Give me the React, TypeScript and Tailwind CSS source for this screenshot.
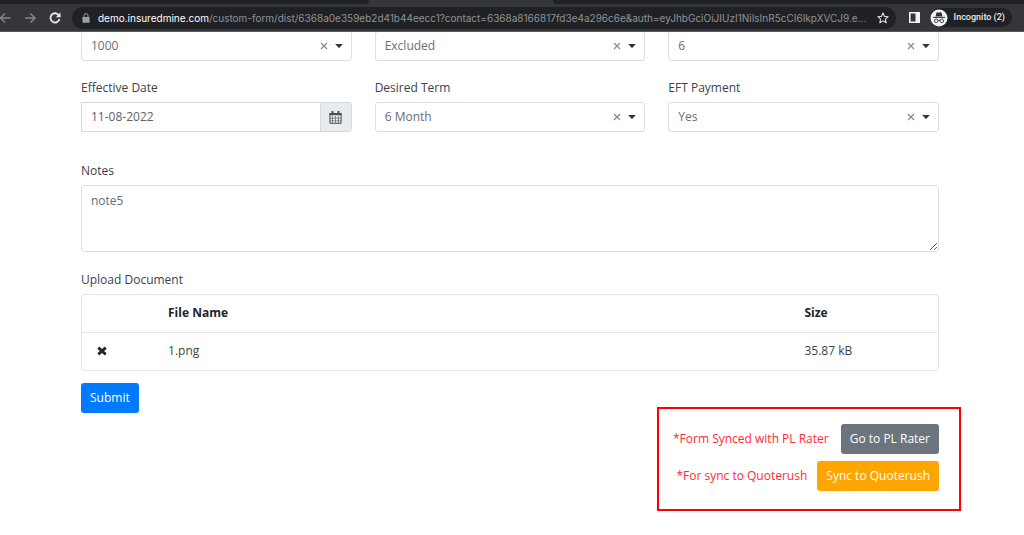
import type { ReactNode } from "react";

type SelectFieldProps = {
  id: string;
  label?: string;
  ariaLabel?: string;
  value: string;
};

function Field({ id, label, children }: { id: string; label: string; children: ReactNode }) {
  return (
    <div>
      <label htmlFor={id} className="mb-1 block h-5 leading-5 text-[#3c4248]">
        {label}
      </label>
      {children}
    </div>
  );
}

function SelectBox({ id, ariaLabel, value }: SelectFieldProps) {
  return (
    <div className="flex h-[30px] items-center rounded-[3px] border border-[#dadfe5] pr-2">
      <select
        id={id}
        aria-label={ariaLabel}
        defaultValue={value}
        className="h-full min-w-0 flex-1 appearance-none bg-transparent pl-[9px] text-[#686e74] outline-none"
      >
        <option>{value}</option>
      </select>
      <button type="button" aria-label="Clear" className="flex h-4 w-4 items-center justify-center">
        <svg viewBox="0 0 8 8" className="h-2 w-2" stroke="#888888" strokeWidth="1.2" fill="none">
          <path d="M1 1L7 7M7 1L1 7" />
        </svg>
      </button>
      <svg viewBox="0 0 8 4" className="ml-[3px] h-1 w-2" fill="#333333">
        <path d="M0.2 0H7.8L4.4 3.8Q4 4.1 3.6 3.8Z" />
      </svg>
    </div>
  );
}

function SelectField({ id, label, value }: SelectFieldProps) {
  return (
    <Field id={id} label={label ?? ""}>
      <SelectBox id={id} value={value} />
    </Field>
  );
}

function BrowserBar() {
  return (
    <header className="relative z-10 bg-[#35363a]">
      <div className="flex h-1 justify-between">
        <div className="w-[36%] rounded-br bg-[#202124]" />
        <div className="w-[46%] rounded-bl bg-[#202124]" />
      </div>
      <div className="flex h-7 items-center border-b border-[#55565a]">
        <button type="button" aria-label="Back" className="w-3">
          <svg viewBox="0 0 12 12" className="h-3 w-3" fill="none" stroke="#85868a" strokeWidth="1.5">
            <path d="M10.5 6H0M5 1.5L0.5 6L5 10.5" />
          </svg>
        </button>
        <button type="button" aria-label="Forward" className="ml-3">
          <svg viewBox="0 0 12 12" className="h-3 w-3" fill="none" stroke="#85868a" strokeWidth="1.5">
            <path d="M1 6H11M6.5 1.5L11 6L6.5 10.5" />
          </svg>
        </button>
        <button type="button" aria-label="Reload" className="ml-[13px]">
          <svg viewBox="0 0 12 12" className="h-3 w-3" fill="none" stroke="#e8eaed" strokeWidth="1.8">
            <path d="M9.8 3.2A4.6 4.6 0 1 0 10.5 7" />
            <path d="M11.5 0.5V5.3H6.8Z" fill="#e8eaed" stroke="none" />
          </svg>
        </button>
        <div className="ml-[11px] flex h-[22px] min-w-0 flex-1 items-center rounded-full bg-[#202124] pr-[7px] pl-[10px] font-['Inter',sans-serif] text-[10px]">
          <svg viewBox="0 0 8 10" className="h-[10px] w-2 shrink-0" fill="#9aa0a6">
            <path d="M1 4H7Q7.6 4 7.6 4.6V9.2Q7.6 9.8 7 9.8H1Q0.4 9.8 0.4 9.2V4.6Q0.4 4 1 4Z" />
            <path d="M2 4.3V2.6A2 2 0 0 1 6 2.6V4.3" fill="none" stroke="#9aa0a6" />
          </svg>
          <label htmlFor="url" className="ml-2 leading-4 text-white">
            demo.insuredmine.com
          </label>
          <input
            id="url"
            type="text"
            className="h-4 min-w-0 flex-1 bg-transparent leading-4 text-[#8f9398] outline-none"
            defaultValue="/custom-form/dist/6368a0e359eb2d41b44eecc1?contact=6368a8166817fd3e4a296c6e&auth=eyJhbGciOiJIUzI1NiIsInR5cCI6IkpXVCJ9.e..."
          />
          <button type="button" aria-label="Bookmark" className="ml-1">
            <svg viewBox="0 0 12 12" className="h-3 w-3" fill="none" stroke="#dfe1e5" strokeWidth="1.1" strokeLinejoin="round">
              <path d="M6 1L7.5 4.4L11.2 4.7L8.4 7.1L9.2 10.8L6 8.9L2.8 10.8L3.6 7.1L0.8 4.7L4.5 4.4Z" />
            </svg>
          </button>
        </div>
        <button type="button" aria-label="Side panel" className="ml-[13px]">
          <svg viewBox="0 0 11 11" className="h-[11px] w-[11px]" fill="#f1f3f4">
            <path fillRule="evenodd" d="M0 0H11V11H0ZM1.6 1.6V9.4H6.5V1.6Z" />
          </svg>
        </button>
        <button
          type="button"
          className="mr-3 ml-[10px] flex h-[19px] items-center rounded-full bg-[#202124] pr-[7px] font-['Roboto',sans-serif] text-[9px] font-medium whitespace-nowrap text-[#e8eaed]"
        >
          <svg viewBox="0 0 18 18" className="mr-[6px] h-[18px] w-[18px]">
            <circle cx="9" cy="9" r="8.5" fill="#f1f3f4" />
            <path d="M5.5 7.4L6.5 3.7Q6.8 3 7.5 3.3L9 3.8L10.5 3.3Q11.2 3 11.5 3.7L12.5 7.4Z" fill="#303134" />
            <path d="M3 8.4H15" stroke="#303134" />
            <g fill="none" stroke="#303134" strokeWidth="0.9">
              <circle cx="6.2" cy="11.8" r="1.8" />
              <circle cx="11.8" cy="11.8" r="1.8" />
              <path d="M8 11.5Q9 10.9 10 11.5" />
            </g>
          </svg>
          Incognito (2)
        </button>
      </div>
    </header>
  );
}

export default function App() {
  return (
    <div className="min-h-screen overflow-hidden bg-white font-['Open_Sans','Noto_Sans',sans-serif] text-[12px] text-[#212529]">
      <BrowserBar />
      <form className="-mt-px pr-[85px] pl-[81px]" onSubmit={(e) => e.preventDefault()}>
        <div className="grid grid-cols-3 gap-x-[23px] gap-y-[17px]">
          <SelectBox id="deductible" ariaLabel="Deductible" value="1000" />
          <SelectBox id="coverage" ariaLabel="Coverage" value="Excluded" />
          <SelectBox id="months" ariaLabel="Months" value="6" />

          <Field id="effective-date" label="Effective Date">
            <div className="flex h-[30px] overflow-hidden rounded-r-[3px] border border-[#d3d9df]">
              <input
                id="effective-date"
                type="text"
                defaultValue="11-08-2022"
                className="min-w-0 flex-1 px-[9px] text-[#5c636a] outline-none"
              />
              <button
                type="button"
                aria-label="Open calendar"
                className="flex w-[31px] items-center justify-center border-l border-[#d3d9df] bg-[#e9ecef]"
              >
                <svg viewBox="0 0 13 13" className="h-[13px] w-[13px]" fill="none" stroke="#495057">
                  <path d="M0.9 2.5H12.1V12.3H0.9Z" />
                  <path d="M0.5 3.2H12.5" strokeWidth="2.2" />
                  <path d="M3.5 0V3.5M9.5 0V3.5" strokeWidth="2" />
                  <path d="M3.5 5V12M6.5 5V12M9.5 5V12M1 7.2H12M1 9.8H12" strokeWidth="0.6" />
                </svg>
              </button>
            </div>
          </Field>
          <SelectField id="desired-term" label="Desired Term" value="6 Month" />
          <SelectField id="eft-payment" label="EFT Payment" value="Yes" />
        </div>

        <div className="mt-[29px]">
          <Field id="notes" label="Notes">
            <textarea
              id="notes"
              defaultValue="note5"
              className="block h-[67px] w-full resize-y rounded-[3px] border border-[#dadfe5] px-[9px] py-[6px] leading-[18px] text-[#686e74] outline-none"
            />
          </Field>
        </div>

        <section className="mt-[18px]">
          <h2 className="mb-1 h-5 leading-5 text-[#3c4248]">Upload Document</h2>
          <div className="rounded-[3px] border border-[#e3e5e8]">
            <table className="w-full table-fixed text-left">
              <thead>
                <tr className="h-[37px] border-b border-[#e3e5e8]">
                  <th className="w-[9%]" aria-label="Remove" />
                  <th className="pl-[9px] font-bold">File Name</th>
                  <th className="w-[17%] pl-3 font-bold">Size</th>
                </tr>
              </thead>
              <tbody>
                <tr className="h-[38px] text-[#3c4248]">
                  <td className="pl-[15px]">
                    <button type="button" aria-label="Remove 1.png" className="block text-[#212529]">
                      <svg viewBox="0 0 10 10" className="h-[10px] w-[10px]" stroke="currentColor" strokeWidth="2.8">
                        <path d="M1.3 1.6L8.7 8.4M8.7 1.6L1.3 8.4" />
                      </svg>
                    </button>
                  </td>
                  <td className="pl-[9px]">1.png</td>
                  <td className="pl-3">35.87 kB</td>
                </tr>
              </tbody>
            </table>
          </div>
        </section>

        <button type="submit" className="mt-3 block h-[30px] rounded-[3px] bg-[#007bff] px-[9px] text-white">
          Submit
        </button>

        <div className="flex justify-end pt-[11px]">
          <div className="relative flex flex-col items-end gap-[7px] text-[#ff2a35]">
            <div className="flex items-center gap-3">
              <span>*Form Synced with PL Rater</span>
              <button type="button" className="h-[30px] rounded-[3px] bg-[#6c757d] px-[9px] text-white">
                Go to PL Rater
              </button>
            </div>
            <div className="flex items-center gap-[10px]">
              <span>*For sync to Quoterush</span>
              <button type="button" className="h-[30px] rounded-[3px] bg-[#ffa500] px-[9px] text-white">
                Sync to Quoterush
              </button>
            </div>
            <div className="pointer-events-none absolute -top-[17px] -right-[22px] -bottom-5 -left-4 border-2 border-[#ff0000]" />
          </div>
        </div>
      </form>
    </div>
  );
}
